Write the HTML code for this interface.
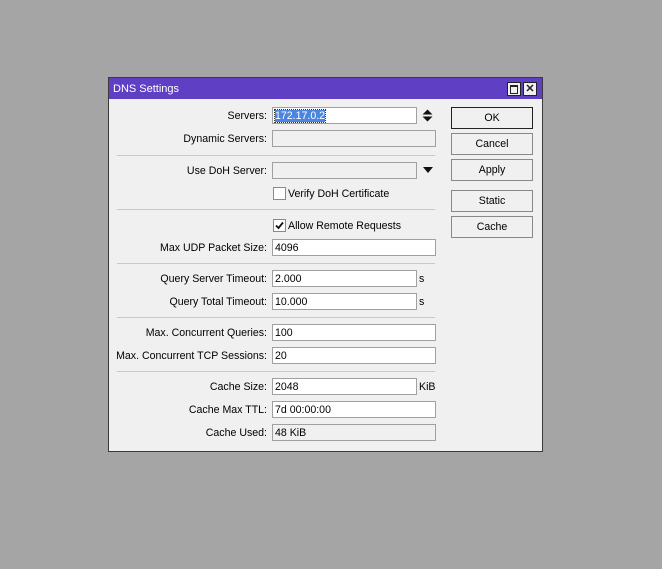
<!DOCTYPE html><html><head><style>
body{margin:0;width:662px;height:569px;background:#a5a5a5;font-family:"Liberation Sans",sans-serif;font-size:10.6px;color:#000;position:relative;overflow:hidden}
.dlg{position:absolute;left:108px;top:77px;width:433px;height:373px;background:#f0f0f0;border:1px solid #3a3a3a}
.tb{position:absolute;left:0;top:0;width:433px;height:21px;background:#5f3fc4;color:#fff}
.tb span{position:absolute;left:4px;top:5px;font-size:11px}
.tbb{position:absolute;top:4px;width:12px;height:12px;background:#f0f0f0;border:1px solid #222}
.a{position:absolute}
.l{position:absolute;right:275px;text-align:right;white-space:nowrap;height:17px;line-height:18px}
.f{position:absolute;left:163px;height:15px;background:#fff;border:1px solid #a0a0a0;line-height:17px;padding-left:2px;box-sizing:content-box}
.f.d{background:#f0f0f0}
.sep{position:absolute;left:8px;width:318px;height:1px;background:#c8c8c8}
.btn{position:absolute;left:342px;width:80px;height:20px;border:1px solid #888;background:#f0f0f0;text-align:center;line-height:21px}
.u{position:absolute;left:310px;height:17px;line-height:18px}
.cb{position:absolute;left:164px;width:11px;height:11px;border:1px solid #8a8a8a;background:#fff}
</style></head><body>
<div class="dlg">
<div class="tb"><span>DNS Settings</span>
<div class="tbb" style="left:398px"><div style="position:absolute;left:2px;top:2px;width:6px;height:6px;border:1px solid #222;border-top-width:2px"></div></div>
<div class="tbb" style="left:414px;font-size:11px;color:#222;text-align:center;line-height:12px;font-weight:bold">✕</div>
</div>
<div class="l" style="top:29px">Servers:</div><div class="f" style="top:29px;width:141px"><span style="background:#4a86e0;color:#fff;outline:1px dotted #333">172.17.0.2</span></div>
<svg class="a" style="left:313px;top:31px" width="11" height="13"><path d="M0.5 5.5L5.5 0.5L10.5 5.5Z M0.5 7.5L5.5 12.5L10.5 7.5Z" fill="#111"/></svg>
<div class="l" style="top:52px">Dynamic Servers:</div><div class="f d" style="top:52px;width:160px"></div>
<div class="sep" style="top:77px"></div>
<div class="l" style="top:84px">Use DoH Server:</div><div class="f d" style="top:84px;width:141px"></div>
<svg class="a" style="left:314px;top:89px" width="11" height="7"><path d="M0 0H10L5 6Z" fill="#111"/></svg>
<div class="cb" style="top:109px"></div><div class="a" style="left:179px;top:108px;height:17px;line-height:17px">Verify DoH Certificate</div>
<div class="sep" style="top:131px"></div>
<div class="cb" style="top:141px"></div><svg class="a" style="left:165px;top:142px" width="11" height="11"><path d="M2 5.5L4.5 8L9 2.5" stroke="#111" stroke-width="1.8" fill="none"/></svg>
<div class="a" style="left:179px;top:140px;height:17px;line-height:17px">Allow Remote Requests</div>
<div class="l" style="top:161px">Max UDP Packet Size:</div><div class="f" style="top:161px;width:160px">4096</div>
<div class="sep" style="top:185px"></div>
<div class="l" style="top:192px">Query Server Timeout:</div><div class="f" style="top:192px;width:141px">2.000</div><div class="u" style="top:192px">s</div>
<div class="l" style="top:215px">Query Total Timeout:</div><div class="f" style="top:215px;width:141px">10.000</div><div class="u" style="top:215px">s</div>
<div class="sep" style="top:239px"></div>
<div class="l" style="top:246px">Max. Concurrent Queries:</div><div class="f" style="top:246px;width:160px">100</div>
<div class="l" style="top:269px">Max. Concurrent TCP Sessions:</div><div class="f" style="top:269px;width:160px">20</div>
<div class="sep" style="top:293px"></div>
<div class="l" style="top:300px">Cache Size:</div><div class="f" style="top:300px;width:141px">2048</div><div class="u" style="top:300px">KiB</div>
<div class="l" style="top:323px">Cache Max TTL:</div><div class="f" style="top:323px;width:160px">7d 00:00:00</div>
<div class="l" style="top:346px">Cache Used:</div><div class="f d" style="top:346px;width:160px">48 KiB</div>
<div class="btn" style="top:29px;border-color:#222">OK</div>
<div class="btn" style="top:55px">Cancel</div>
<div class="btn" style="top:81px">Apply</div>
<div class="btn" style="top:112px">Static</div>
<div class="btn" style="top:138px">Cache</div>
</div>
</body></html>
